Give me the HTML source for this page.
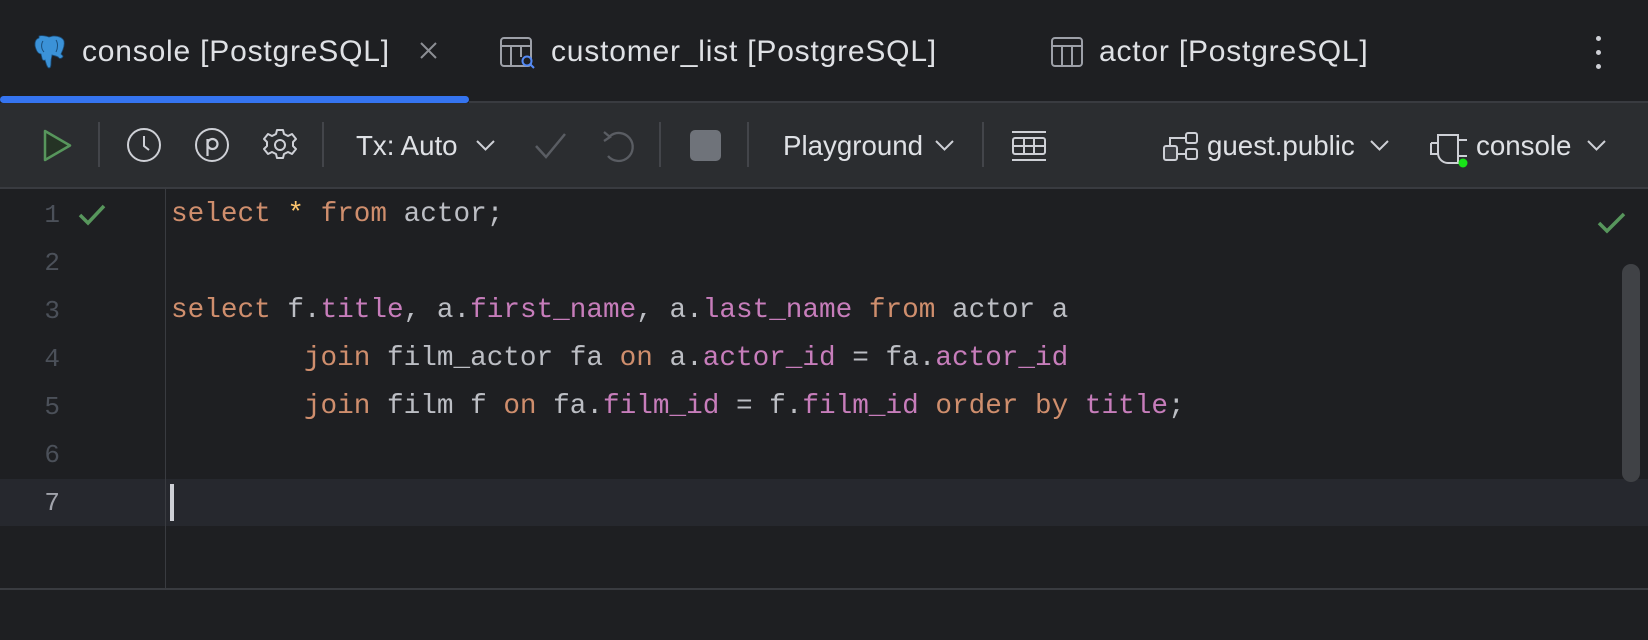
<!DOCTYPE html>
<html><head><meta charset="utf-8"><style>
*{margin:0;padding:0;box-sizing:border-box}
body{width:1648px;height:640px;background:#1e1f22;position:relative;overflow:hidden;font-family:"Liberation Sans",sans-serif;color:#dfe1e5}
.a{position:absolute}
.tab{position:absolute;top:33px;font-size:30px;letter-spacing:0.8px;line-height:38px;color:#dfe1e5;white-space:nowrap}
.tb{position:absolute;top:128px;font-size:27.7px;line-height:36px;color:#dfe1e5;white-space:nowrap}
.sep{position:absolute;top:122px;width:2px;height:45px;background:#43454a}
.code{position:absolute;left:171px;font-family:"Liberation Mono",monospace;font-size:27.7px;line-height:48px;color:#bcbec4;white-space:pre}
.k{color:#cf8e6d}.f{color:#c77dbb}.s{color:#ffc66d}
.ln{position:absolute;width:60px;text-align:right;font-family:"Liberation Mono",monospace;font-size:26px;line-height:48px;color:#4b5059}
svg{position:absolute;overflow:visible}
</style></head><body>
<!-- tab bar -->
<svg style="left:34px;top:35px" width="33" height="34" viewBox="0 0 33 34"><path d="M5 3C1 4 0 9 2 14c1 3 3 5 5 5l1 4c0 2 2 3 3 2 1 3 2 8 4 8s2-3 2-6c0-4 1-5 1-7 3 1 6 1 7 3 1 1 4 0 4-2l-2-2c2-4 4-9 3-13-1-3-5-5-10-5-2 0-4 1-5 1-3-1-7-2-10-1z" fill="#3b92d8" stroke="#1a4d7a" stroke-width="0.8"/><path d="M9 6c-2 3-2 8 1 11M22 5c2 3 2 8 0 12" fill="none" stroke="#1a4d7a" stroke-width="1"/></svg>
<div class="tab" style="left:82px">console [PostgreSQL]</div>
<svg style="left:420px;top:42px" width="17" height="17" viewBox="0 0 17 17"><path d="M1 1L16 16M16 1L1 16" stroke="#8c8e94" stroke-width="2"/></svg>
<svg style="left:500px;top:37px" width="36" height="32" viewBox="0 0 36 32"><rect x="1" y="1" width="30" height="28" rx="3" fill="none" stroke="#9da0a8" stroke-width="2"/><path d="M1 9H31M11 9V29M21 9V20" stroke="#9da0a8" stroke-width="2"/><circle cx="27" cy="24" r="4.5" fill="#1e1f22" stroke="#548af7" stroke-width="2"/><path d="M30 27l4 4" stroke="#548af7" stroke-width="2"/></svg>
<div class="tab" style="left:551px">customer_list [PostgreSQL]</div>
<svg style="left:1051px;top:37px" width="34" height="32" viewBox="0 0 34 32"><rect x="1" y="1" width="30" height="28" rx="3" fill="none" stroke="#9da0a8" stroke-width="2"/><path d="M1 9H31M11 9V29M21 9V29" stroke="#9da0a8" stroke-width="2"/></svg>
<div class="tab" style="left:1099px">actor [PostgreSQL]</div>
<div class="a" style="left:1596px;top:36px;width:5px;height:5px;border-radius:50%;background:#ced0d6"></div>
<div class="a" style="left:1596px;top:50px;width:5px;height:5px;border-radius:50%;background:#ced0d6"></div>
<div class="a" style="left:1596px;top:64px;width:5px;height:5px;border-radius:50%;background:#ced0d6"></div>
<div class="a" style="left:0;top:96px;width:469px;height:7px;border-radius:4px;background:#3574f0"></div>
<div class="a" style="left:469px;top:101px;width:1179px;height:2px;background:#393b40"></div>
<!-- toolbar -->
<div class="a" style="left:0;top:103px;width:1648px;height:85px;background:#2b2d30"></div>
<div class="a" style="left:0;top:187px;width:1648px;height:2px;background:#393b40"></div>
<svg style="left:42px;top:128px" width="30" height="35" viewBox="0 0 30 35"><path d="M3 3L28 17.5L3 32Z" fill="#253325" stroke="#57965c" stroke-width="2.5" stroke-linejoin="round"/></svg>
<div class="sep" style="left:98px"></div>
<svg style="left:127px;top:128px" width="34" height="34" viewBox="0 0 34 34"><circle cx="17" cy="17" r="16" fill="none" stroke="#ced0d6" stroke-width="2"/><path d="M17 8V18L22 22" fill="none" stroke="#ced0d6" stroke-width="2"/></svg>
<svg style="left:195px;top:128px" width="34" height="34" viewBox="0 0 34 34"><circle cx="17" cy="17" r="16" fill="none" stroke="#ced0d6" stroke-width="2"/><path d="M12.5 11V28" fill="none" stroke="#ced0d6" stroke-width="2.2"/><circle cx="17.5" cy="16" r="5" fill="none" stroke="#ced0d6" stroke-width="2.2"/></svg>
<svg style="left:263px;top:128px" width="34" height="34" viewBox="0 0 34 34"><path d="M14 2h6l1 4 4 2 4-2 4 5-3 3v4l3 3-4 5-4-2-4 2-1 4h-6l-1-4-4-2-4 2-4-5 3-3v-4L1 11l4-5 4 2 4-2z" fill="none" stroke="#ced0d6" stroke-width="2" stroke-linejoin="round"/><circle cx="17" cy="17" r="5" fill="none" stroke="#ced0d6" stroke-width="2"/></svg>
<div class="sep" style="left:322px"></div>
<div class="tb" style="left:356px">Tx: Auto</div>
<svg style="left:476px;top:140px" width="19" height="11" viewBox="0 0 19 11"><path d="M1 1L9.5 9.5L18 1" fill="none" stroke="#ced0d6" stroke-width="2"/></svg>
<svg style="left:534px;top:132px" width="33" height="28" viewBox="0 0 33 28"><path d="M2 14L12 25L31 2" fill="none" stroke="#5a5d63" stroke-width="2.5"/></svg>
<svg style="left:602px;top:128px" width="32" height="36" viewBox="0 0 32 36"><path d="M8 8A14 14 0 1 1 6 28" fill="none" stroke="#5a5d63" stroke-width="2.3"/><path d="M2 4L8 9L2 13" fill="none" stroke="#5a5d63" stroke-width="2.3"/></svg>
<div class="sep" style="left:659px"></div>
<div class="a" style="left:690px;top:130px;width:31px;height:31px;border-radius:5px;background:#6f737a"></div>
<div class="sep" style="left:747px"></div>
<div class="tb" style="left:783px">Playground</div>
<svg style="left:935px;top:140px" width="19" height="11" viewBox="0 0 19 11"><path d="M1 1L9.5 9.5L18 1" fill="none" stroke="#ced0d6" stroke-width="2"/></svg>
<div class="sep" style="left:982px"></div>
<svg style="left:1011px;top:130px" width="36" height="32" viewBox="0 0 36 32"><path d="M1 2H35M1 30H35" stroke="#ced0d6" stroke-width="2"/><rect x="2" y="8" width="32" height="16" rx="2" fill="none" stroke="#ced0d6" stroke-width="2"/><path d="M2 16H34M13 8V24M23 8V24" stroke="#ced0d6" stroke-width="2"/></svg>
<svg style="left:1163px;top:131px" width="36" height="31" viewBox="0 0 36 31"><rect x="1" y="15" width="13" height="14" rx="2" fill="#3f4146" stroke="#ced0d6" stroke-width="2"/><rect x="23" y="2" width="11" height="10" rx="2" fill="none" stroke="#ced0d6" stroke-width="2"/><rect x="23" y="18" width="11" height="10" rx="2" fill="none" stroke="#ced0d6" stroke-width="2"/><path d="M7 15V7H23M14 23H23" fill="none" stroke="#ced0d6" stroke-width="2"/></svg>
<div class="tb" style="left:1207px">guest.public</div>
<svg style="left:1370px;top:140px" width="19" height="11" viewBox="0 0 19 11"><path d="M1 1L9.5 9.5L18 1" fill="none" stroke="#ced0d6" stroke-width="2"/></svg>
<svg style="left:1430px;top:132px" width="42" height="36" viewBox="0 0 42 36"><path d="M1 11H8M1 11V22H8" fill="none" stroke="#ced0d6" stroke-width="2"/><path d="M8 3H28V31H18A10 10 0 0 1 8 21Z" fill="none" stroke="#ced0d6" stroke-width="2"/><path d="M28 8H37M28 24H37" stroke="#ced0d6" stroke-width="2"/><circle cx="33" cy="31" r="4.5" fill="#18e318"/></svg>
<div class="tb" style="left:1476px">console</div>
<svg style="left:1587px;top:140px" width="19" height="11" viewBox="0 0 19 11"><path d="M1 1L9.5 9.5L18 1" fill="none" stroke="#ced0d6" stroke-width="2"/></svg>
<!-- editor -->
<div class="a" style="left:0;top:479px;width:1648px;height:47px;background:#26282e"></div>
<div class="a" style="left:165px;top:189px;width:1px;height:399px;background:#393b40"></div>
<div class="a" style="left:0;top:588px;width:1648px;height:2px;background:#393b40"></div>
<div class="ln" style="left:0;top:191px">1</div>
<div class="ln" style="left:0;top:239px">2</div>
<div class="ln" style="left:0;top:287px">3</div>
<div class="ln" style="left:0;top:335px">4</div>
<div class="ln" style="left:0;top:383px">5</div>
<div class="ln" style="left:0;top:431px">6</div>
<div class="ln" style="left:0;top:479px;color:#a1a3ab">7</div>
<svg style="left:78px;top:204px" width="28" height="22" viewBox="0 0 28 22"><path d="M2 11L10 19L26 2" fill="none" stroke="#57965c" stroke-width="3.5"/></svg>
<svg style="left:1597px;top:212px" width="30" height="24" viewBox="0 0 30 24"><path d="M2 11L10 19L27 2" fill="none" stroke="#57965c" stroke-width="3.5"/></svg>
<div class="code" style="top:191px"><span class="k">select</span> <span class="s">*</span> <span class="k">from</span> actor;</div>
<div class="code" style="top:287px"><span class="k">select</span> f.<span class="f">title</span>, a.<span class="f">first_name</span>, a.<span class="f">last_name</span> <span class="k">from</span> actor a</div>
<div class="code" style="top:335px">        <span class="k">join</span> film_actor fa <span class="k">on</span> a.<span class="f">actor_id</span> = fa.<span class="f">actor_id</span></div>
<div class="code" style="top:383px">        <span class="k">join</span> film f <span class="k">on</span> fa.<span class="f">film_id</span> = f.<span class="f">film_id</span> <span class="k">order by</span> <span class="f">title</span>;</div>
<div class="a" style="left:170px;top:484px;width:4px;height:37px;background:#ced0d6"></div>
<div class="a" style="left:1622px;top:264px;width:18px;height:218px;border-radius:9px;background:#404246"></div>
</body></html>
